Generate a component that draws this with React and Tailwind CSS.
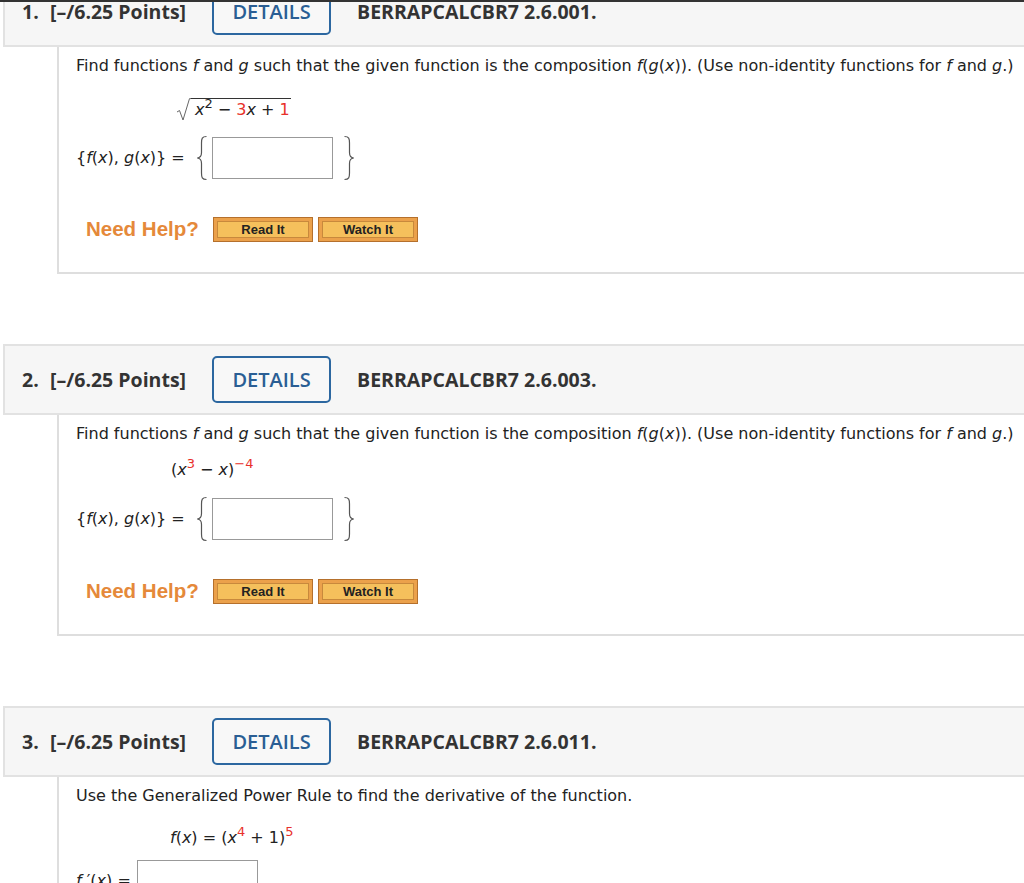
import React from 'react';

const Var = ({ children }) => <i className="italic">{children}</i>;
const Red = ({ children }) => <span className="text-[#e8302a]">{children}</span>;

const Brace = ({ flip }) => (
  <svg width="12" height="46" viewBox="0 0 12 46" className={flip ? 'scale-x-[-1]' : ''}>
    <path
      d="M10.5 1.5 C6 1.5 5.5 3.5 5.5 8 L5.5 17.5 C5.5 21 4 22.8 1.2 23 C4 23.2 5.5 25 5.5 28.5 L5.5 38 C5.5 42.5 6 44.5 10.5 44.5"
      fill="none"
      stroke="#555"
      strokeWidth="1.2"
    />
  </svg>
);

const Header = ({ num, code }) => (
  <div className="h-[71px] ml-[3px] w-[1060px] border-2 border-[#e2e2e2] bg-[#f6f6f6] flex items-center pl-[17px] font-['Open_Sans',sans-serif] font-bold text-[19.5px] text-[#333]">
    <span className="w-[28px]">{num}.</span>
    <span>[–/6.25 Points]</span>
    <span className="ml-[26px] w-[119px] h-[47px] border-2 border-[#2c67a0] rounded-[5px] flex items-center justify-center font-semibold text-[20px] text-[#2a5e94] bg-[#f8f8f8]">
      DETAILS
    </span>
    <span className="ml-[26px]">{code}</span>
  </div>
);

const HelpButton = ({ label }) => (
  <div className="w-[100px] h-[25px] border border-[#b5702c] bg-[#eba14b] p-[3px]">
    <div className="h-full border border-[#c8893c] bg-[#f5c05c] flex items-center justify-center text-[13px] font-bold text-[#222] font-['Liberation_Sans',Arial,sans-serif]">
      {label}
    </div>
  </div>
);

const AnswerRow = () => (
  <div className="flex items-center">
    <span className="w-[120px]">
      {'{'}<Var>f</Var>(<Var>x</Var>), <Var>g</Var>(<Var>x</Var>){'}'} =
    </span>
    <Brace />
    <div className="ml-[4px] w-[121px] h-[42px] border border-[#999] bg-white" />
    <div className="ml-[10px]">
      <Brace flip />
    </div>
  </div>
);

const NeedHelp = () => (
  <div className="flex items-center ml-[10px]">
    <span className="w-[127px] font-['Liberation_Sans',Arial,sans-serif] font-bold text-[20.5px] text-[#e5893a]">
      Need Help?
    </span>
    <HelpButton label="Read It" />
    <div className="ml-[5px]">
      <HelpButton label="Watch It" />
    </div>
  </div>
);

const Body = ({ children, h }) => (
  <div className={`ml-[57px] w-[1020px] border-l-2 border-b-2 border-[#dedede] pl-[17px] pt-[9px] font-['DejaVu_Sans',Verdana,sans-serif] text-[16px] text-[#222] ${h}`}>
    {children}
  </div>
);

const compText = (
  <p className="leading-[20px] whitespace-nowrap">
    Find functions <Var>f</Var> and <Var>g</Var> such that the given function is the composition{' '}
    <Var>f</Var>(<Var>g</Var>(<Var>x</Var>)). (Use non-identity functions for <Var>f</Var> and <Var>g</Var>.)
  </p>
);

const Sup = ({ children }) => (
  <sup className="text-[13px] text-[#e8302a] relative -top-[7px] align-baseline">{children}</sup>
);

export default function App() {
  return (
    <div className="w-[1024px] h-[883px] overflow-hidden bg-white border-t-2 border-[#333]">
      <div className="-mt-[26px]">
        <Header num="1" code="BERRAPCALCBR7 2.6.001." />
        <Body h="h-[227px]">
          {compText}
          <div className="ml-[100px] mt-[19px] flex items-end h-[26px]">
            <svg width="15" height="23" viewBox="0 0 15 23">
              <path d="M1 14 L3.5 12.5 L7 22 L13.5 0.6 L15 0.6" fill="none" stroke="#666" strokeWidth="1" />
            </svg>
            <span className="border-t border-[#333] pl-[4px] pr-[1px] leading-[22px]">
              <Var>x</Var>
              <sup className="text-[13px] -top-[7px] relative align-baseline">2</sup> − <Red>3</Red>
              <Var>x</Var> + <Red>1</Red>
            </span>
          </div>
          <div className="mt-[14px]">
            <AnswerRow />
          </div>
          <div className="mt-[33px]">
            <NeedHelp />
          </div>
        </Body>
        <div className="h-[70px]" />
        <Header num="2" code="BERRAPCALCBR7 2.6.003." />
        <Body h="h-[221px]">
          {compText}
          <div className="ml-[95px] mt-[11px] leading-[22px] pt-[4px]">
            (<Var>x</Var>
            <Sup>3</Sup> − <Var>x</Var>)<Sup>−4</Sup>
          </div>
          <div className="mt-[15px]">
            <AnswerRow />
          </div>
          <div className="mt-[34px]">
            <NeedHelp />
          </div>
        </Body>
        <div className="h-[70px]" />
        <Header num="3" code="BERRAPCALCBR7 2.6.011." />
        <Body h="h-[200px]">
          <p className="leading-[20px]">Use the Generalized Power Rule to find the derivative of the function.</p>
          <div className="ml-[94px] mt-[21px] leading-[22px]">
            <Var>f</Var>(<Var>x</Var>) = (<Var>x</Var>
            <Sup>4</Sup> + 1)<Sup>5</Sup>
          </div>
          <div className="mt-[11px] flex items-center">
            <span className="w-[61px]">
              <Var>f</Var> ′(<Var>x</Var>) =
            </span>
            <div className="w-[121px] h-[42px] border border-[#999] bg-white" />
          </div>
        </Body>
      </div>
    </div>
  );
}
